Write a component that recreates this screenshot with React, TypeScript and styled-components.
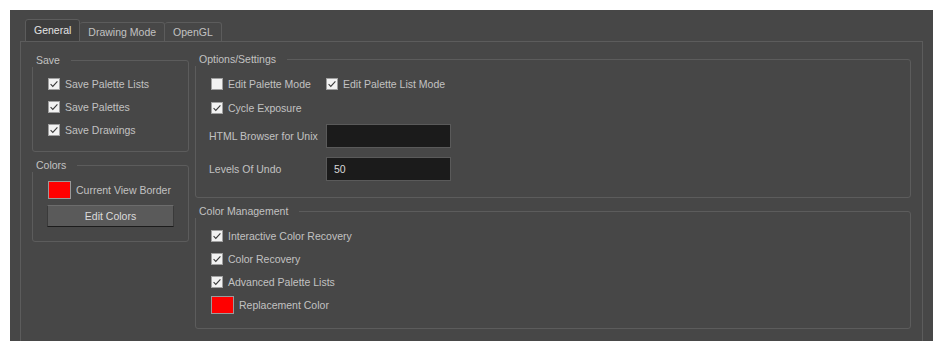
import React from "react";
import styled, { createGlobalStyle } from "styled-components";

const GlobalStyle = createGlobalStyle`
  body {
    margin: 0;
    background: #ffffff;
    font-family: "Liberation Sans", Arial, sans-serif;
  }
`;

const Window = styled.div`
  margin: 10px;
  width: 923px;
  height: 331px;
  box-sizing: border-box;
  background: #474747;
  padding: 10px 10px 0 10px;
  display: flex;
  flex-direction: column;
  overflow: hidden;
  font-size: 10.5px;
  color: #c2c2c2;
`;

const TabBar = styled.div`
  display: flex;
  align-items: flex-end;
  padding-left: 5px;
  height: 22px;
  position: relative;
  z-index: 1;
  margin-bottom: -1px;
`;

type TabProps = { active?: boolean };

const Tab = styled.div<TabProps>`
  box-sizing: border-box;
  height: ${(p) => (p.active ? "23px" : "20px")};
  padding: 0 8px;
  display: flex;
  align-items: center;
  padding-bottom: ${(p) => (p.active ? "2px" : "0")};
  border: 1px solid #5c5c5c;
  border-left-width: ${(p) => (p.active ? "1px" : "0")};
  border-radius: 3px 3px 0 0;
  background: ${(p) => (p.active ? "#3e3e3e" : "#474747")};
  color: ${(p) => (p.active ? "#e4e4e4" : "#c2c2c2")};
  white-space: nowrap;
`;

const Pane = styled.div`
  flex: 1;
  border: 1px solid #5c5c5c;
  border-bottom: none;
  padding: 18px 11px 0 11px;
  display: flex;
  gap: 6px;
  align-items: flex-start;
`;

const Column = styled.div<{ width?: number }>`
  display: flex;
  flex-direction: column;
  gap: 13px;
  width: ${(p) => (p.width ? `${p.width}px` : "auto")};
  flex: ${(p) => (p.width ? "none" : "1")};
`;

const Group = styled.div<{ pad: string }>`
  position: relative;
  border: 1px solid #5c5c5c;
  border-radius: 3px;
  padding: ${(p) => p.pad};
  display: flex;
  flex-direction: column;
`;

const GroupTitle = styled.div`
  position: absolute;
  top: -7px;
  left: -1px;
  height: 13px;
  line-height: 13px;
  padding: 0 11px 0 4px;
  background: #474747;
  white-space: nowrap;
`;

const CheckRow = styled.label<{ h?: number }>`
  display: flex;
  align-items: center;
  gap: 5px;
  height: ${(p) => p.h ?? 23}px;
  white-space: nowrap;
`;

const Box = styled.span`
  box-sizing: border-box;
  width: 12px;
  height: 12px;
  background: #f2f2f2;
  border: 1px solid #a0a0a0;
  display: flex;
  align-items: center;
  justify-content: center;
  flex: none;
`;

const Swatch = styled.span`
  box-sizing: border-box;
  width: 23px;
  height: 18px;
  background: #ff0000;
  border: 1px solid #9a9a9a;
  flex: none;
`;

const Button = styled.div`
  box-sizing: border-box;
  margin-top: 4px;
  margin-left: -1px;
  width: 127px;
  height: 22px;
  background: #5a5a5a;
  border: 1px solid #3a3a3a;
  border-top-color: #6c6c6c;
  border-bottom-color: #1c1c1c;
  display: flex;
  align-items: center;
  justify-content: center;
  color: #dcdcdc;
`;

const OptionsGrid = styled.div`
  display: grid;
  grid-template-columns: 115px auto;
  justify-content: start;
  align-items: center;
`;

const FieldLabel = styled.div<{ mt: number }>`
  margin-left: -2px;
  margin-top: ${(p) => p.mt}px;
  white-space: nowrap;
`;

const Input = styled.div<{ mt: number }>`
  box-sizing: border-box;
  margin-top: ${(p) => p.mt}px;
  width: 125px;
  height: 24px;
  background: #1b1b1b;
  border: 1px solid #5a5a5a;
  padding-left: 7px;
  display: flex;
  align-items: center;
  color: #d8d8d8;
`;

const Check = ({ checked }: { checked?: boolean }) => (
  <Box>
    {checked && (
      <svg width="10" height="10" viewBox="0 0 10 10">
        <path
          d="M1.6 5.2 L3.8 7.4 L8.4 2.4"
          fill="none"
          stroke="#3a3a3a"
          strokeWidth="1.1"
        />
      </svg>
    )}
  </Box>
);

const CheckItem = ({
  label,
  checked,
  h,
}: {
  label: string;
  checked?: boolean;
  h?: number;
}) => (
  <CheckRow h={h}>
    <Check checked={checked} />
    {label}
  </CheckRow>
);

export default function App() {
  return (
    <>
      <GlobalStyle />
      <Window>
        <TabBar>
          <Tab active>General</Tab>
          <Tab>Drawing Mode</Tab>
          <Tab>OpenGL</Tab>
        </TabBar>
        <Pane>
          <Column width={157}>
            <Group pad="11px 0 10px 15px">
              <GroupTitle>Save</GroupTitle>
              <CheckItem label="Save Palette Lists" checked />
              <CheckItem label="Save Palettes" checked />
              <CheckItem label="Save Drawings" checked />
            </Group>
            <Group pad="12px 0 14px 15px">
              <GroupTitle>Colors</GroupTitle>
              <CheckRow>
                <Swatch />
                Current View Border
              </CheckRow>
              <Button>Edit Colors</Button>
            </Group>
          </Column>
          <Column style={{ marginTop: -1 }}>
            <Group pad="12px 0 16px 15px">
              <GroupTitle>Options/Settings</GroupTitle>
              <OptionsGrid>
                <CheckItem label="Edit Palette Mode" h={24} />
                <CheckItem label="Edit Palette List Mode" checked h={24} />
                <CheckItem label="Cycle Exposure" checked h={24} />
                <div />
                <FieldLabel mt={4}>HTML Browser for Unix</FieldLabel>
                <Input mt={4} />
                <FieldLabel mt={9}>Levels Of Undo</FieldLabel>
                <Input mt={9}>50</Input>
              </OptionsGrid>
            </Group>
            <Group pad="12px 0 12px 15px">
              <GroupTitle>Color Management</GroupTitle>
              <CheckItem label="Interactive Color Recovery" checked />
              <CheckItem label="Color Recovery" checked />
              <CheckItem label="Advanced Palette Lists" checked />
              <CheckRow>
                <Swatch />
                Replacement Color
              </CheckRow>
            </Group>
          </Column>
        </Pane>
      </Window>
    </>
  );
}
